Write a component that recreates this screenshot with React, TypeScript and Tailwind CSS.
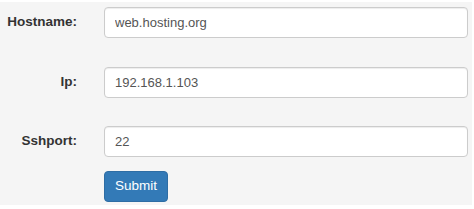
import { useState } from "react";

type Field = {
  key: string;
  label: string;
  value: string;
  gap: string;
};

const fields: Field[] = [
  { key: "hostname", label: "Hostname:", value: "web.hosting.org", gap: "mt-0" },
  { key: "ip", label: "Ip:", value: "192.168.1.103", gap: "mt-[29px]" },
  { key: "sshport", label: "Sshport:", value: "22", gap: "mt-[28px]" },
];

export default function App() {
  const [values, setValues] = useState<Record<string, string>>(
    Object.fromEntries(fields.map((f) => [f.key, f.value]))
  );

  return (
    <div className="h-[209px] w-[474px] bg-white pt-[2px] font-['Liberation_Sans',sans-serif]">
      <form
        onSubmit={(e) => e.preventDefault()}
        className="w-[472px] bg-[#f5f5f5] pb-[3px] pr-[4px] pt-[5px]"
      >
        {fields.map((field) => (
          <div key={field.key} className={`flex items-center ${field.gap}`}>
            <label
              htmlFor={field.key}
              className="w-[77px] text-right text-[13.5px] font-bold text-[#333]"
            >
              {field.label}
            </label>
            <input
              id={field.key}
              value={values[field.key]}
              onChange={(e) =>
                setValues((prev) => ({ ...prev, [field.key]: e.target.value }))
              }
              className="ml-[27px] h-[31px] flex-1 rounded-[4px] border border-[#ccc] bg-white px-[10px] text-[13px] text-[#555] shadow-[inset_0_1px_1px_rgba(0,0,0,0.075)] outline-none"
            />
          </div>
        ))}

        <div className="mt-[14px] pl-[104px]">
          <button
            type="submit"
            className="h-[31px] w-[64px] rounded-[4px] border border-[#2e6da4] bg-[#337ab7] text-[13.5px] text-white"
          >
            Submit
          </button>
        </div>
      </form>
    </div>
  );
}
